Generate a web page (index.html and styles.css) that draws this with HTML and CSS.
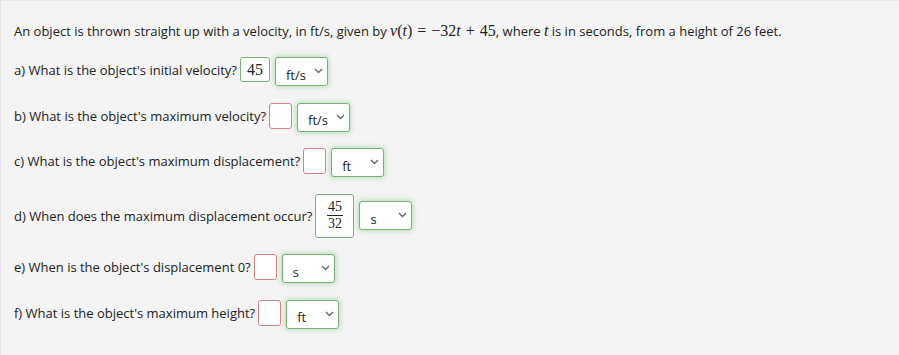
FILE: index.html
```html
<!DOCTYPE html>
<html>
<head>
<meta charset="utf-8">
<link rel="stylesheet" href="styles.css">
</head>
<body>
<div class="page">
  <p class="intro">An object is thrown straight up with a velocity, in ft/s, given by <span class="math"><i>v</i>(<i>t</i>)<span class="op">=</span>−32<i>t</i><span class="op">+</span>45</span>, where <span class="math"><i>t</i></span> is in seconds, from a height of 26 feet.</p>
  <div class="questions">
    <div class="row">
      <span class="label">a) What is the object's initial velocity?</span>
      <span class="answer ok"><span class="num">45</span></span>
      <span class="select"><span class="sel-text">ft/s</span><svg class="chev" width="9" height="6" viewBox="0 0 9 6"><path d="M1 1 L4.5 4.5 L8 1" fill="none" stroke="#666" stroke-width="1.4"/></svg></span>
    </div>
    <div class="row">
      <span class="label">b) What is the object's maximum velocity?</span>
      <span class="answer bad"></span>
      <span class="select"><span class="sel-text">ft/s</span><svg class="chev" width="9" height="6" viewBox="0 0 9 6"><path d="M1 1 L4.5 4.5 L8 1" fill="none" stroke="#666" stroke-width="1.4"/></svg></span>
    </div>
    <div class="row">
      <span class="label">c) What is the object's maximum displacement?</span>
      <span class="answer bad"></span>
      <span class="select"><span class="sel-text">ft</span><svg class="chev" width="9" height="6" viewBox="0 0 9 6"><path d="M1 1 L4.5 4.5 L8 1" fill="none" stroke="#666" stroke-width="1.4"/></svg></span>
    </div>
    <div class="row tall">
      <span class="label">d) When does the maximum displacement occur?</span>
      <span class="answer ok frac-box"><span class="frac"><span class="numer">45</span><span class="denom">32</span></span></span>
      <span class="select"><span class="sel-text">s</span><svg class="chev" width="9" height="6" viewBox="0 0 9 6"><path d="M1 1 L4.5 4.5 L8 1" fill="none" stroke="#666" stroke-width="1.4"/></svg></span>
    </div>
    <div class="row">
      <span class="label">e) When is the object's displacement 0?</span>
      <span class="answer bad"></span>
      <span class="select"><span class="sel-text">s</span><svg class="chev" width="9" height="6" viewBox="0 0 9 6"><path d="M1 1 L4.5 4.5 L8 1" fill="none" stroke="#666" stroke-width="1.4"/></svg></span>
    </div>
    <div class="row">
      <span class="label">f) What is the object's maximum height?</span>
      <span class="answer bad"></span>
      <span class="select"><span class="sel-text">ft</span><svg class="chev" width="9" height="6" viewBox="0 0 9 6"><path d="M1 1 L4.5 4.5 L8 1" fill="none" stroke="#666" stroke-width="1.4"/></svg></span>
    </div>
  </div>
</div>
</body>
</html>
```

FILE: styles.css
```css
html, body {
  margin: 0;
  padding: 0;
  background: #f4f4f4;
}
body {
  font-family: "Open Sans", "Noto Sans", sans-serif;
  font-size: 13px;
  color: #222;
  height: 355px;
  box-sizing: border-box;
  border-left: 1px solid #e2e2e2;
  border-top: 1px solid #e8e8e8;
}
.page {
  padding: 20px 0 0 13px;
}
.intro {
  margin: 0;
  line-height: 20px;
}
.math {
  font-family: "Liberation Serif", "DejaVu Serif", serif;
  font-size: 16px;
}
.math i {
  font-style: italic;
}
.op {
  margin: 0 5px;
}
.questions {
  display: flex;
  flex-direction: column;
  gap: 16.5px;
  margin-top: 16px;
}
.row {
  display: flex;
  align-items: flex-start;
}
.row.tall {
  align-items: center;
}
.label {
  margin-right: 3px;
  line-height: 26px;
}
.answer {
  box-sizing: border-box;
  width: 23px;
  height: 26px;
  background: #fff;
  border-radius: 3px;
  display: flex;
  align-items: center;
  justify-content: center;
}
.answer.ok {
  border: 1px solid #76b276;
  width: 30px;
  height: 25px;
}
.answer.bad {
  border: 1px solid #d78282;
}
.num {
  font-family: "Liberation Serif", "DejaVu Serif", serif;
  font-size: 16px;
}
.answer.frac-box {
  width: 39px;
  height: 44px;
}
.frac {
  display: flex;
  flex-direction: column;
  align-items: center;
  font-family: "Liberation Serif", "DejaVu Serif", serif;
  font-size: 14px;
  line-height: 14px;
}
.numer {
  padding: 0 1px 1px;
  border-bottom: 1px solid #222;
}
.denom {
  padding-top: 1px;
}
.select {
  box-sizing: border-box;
  width: 53px;
  height: 29px;
  margin-left: 5px;
  background: #fff;
  border: 1px solid #76b276;
  border-radius: 3px;
  box-shadow: 0 0 5px 1px rgba(100, 185, 100, 0.4);
  display: flex;
  align-items: center;
  justify-content: space-between;
  padding: 0 4px 0 10px;
}
.sel-text {
  padding-top: 6px;
}
.chev {
  display: block;
  margin-top: -1px;
}
```
